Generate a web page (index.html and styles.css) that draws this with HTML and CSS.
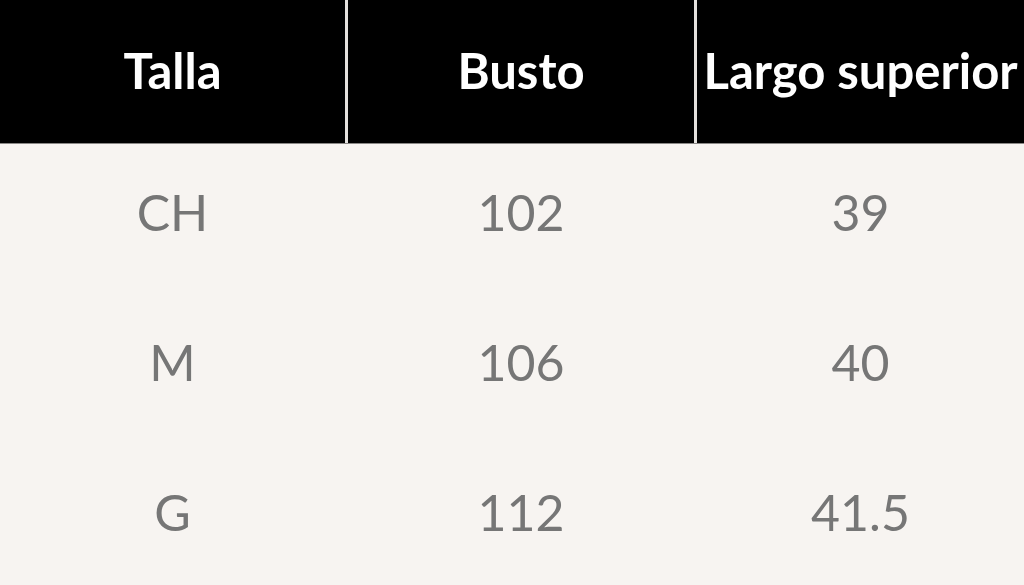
FILE: index.html
```html
<!DOCTYPE html>
<html lang="es">
<head>
<meta charset="utf-8">
<title>Tabla de tallas</title>
<link rel="stylesheet" href="styles.css">
</head>
<body>
<div class="table">
  <div class="row head">
    <div class="cell">Talla</div>
    <div class="cell">Busto</div>
    <div class="cell">Largo superior</div>
  </div>
  <div class="row">
    <div class="cell">CH</div>
    <div class="cell">102</div>
    <div class="cell">39</div>
  </div>
  <div class="row">
    <div class="cell">M</div>
    <div class="cell">106</div>
    <div class="cell">40</div>
  </div>
  <div class="row">
    <div class="cell">G</div>
    <div class="cell">112</div>
    <div class="cell">41.5</div>
  </div>
</div>
</body>
</html>
```
FILE: styles.css
```css
html, body {
  margin: 0;
  padding: 0;
  width: 1024px;
  height: 585px;
  overflow: hidden;
  background: #f7f4f1;
  font-family: Lato, "Open Sans", sans-serif;
}
.table {
  display: flex;
  flex-direction: column;
}
.row {
  display: grid;
  grid-template-columns: 345px 346px 327px;
  column-gap: 3px;
  height: 150px;
}
.row .cell {
  display: flex;
  align-items: center;
  justify-content: center;
  font-size: 50px;
  color: #767676;
  white-space: nowrap;
  padding-bottom: 14px;
}
.row.head {
  height: 143px;
  background: #e4e1de;
  border-bottom: 1px solid #8a8886;
}
.row.head .cell {
  background: #000;
  color: #fff;
  font-weight: 700;
  font-size: 49px;
  padding-bottom: 4px;
}
```
